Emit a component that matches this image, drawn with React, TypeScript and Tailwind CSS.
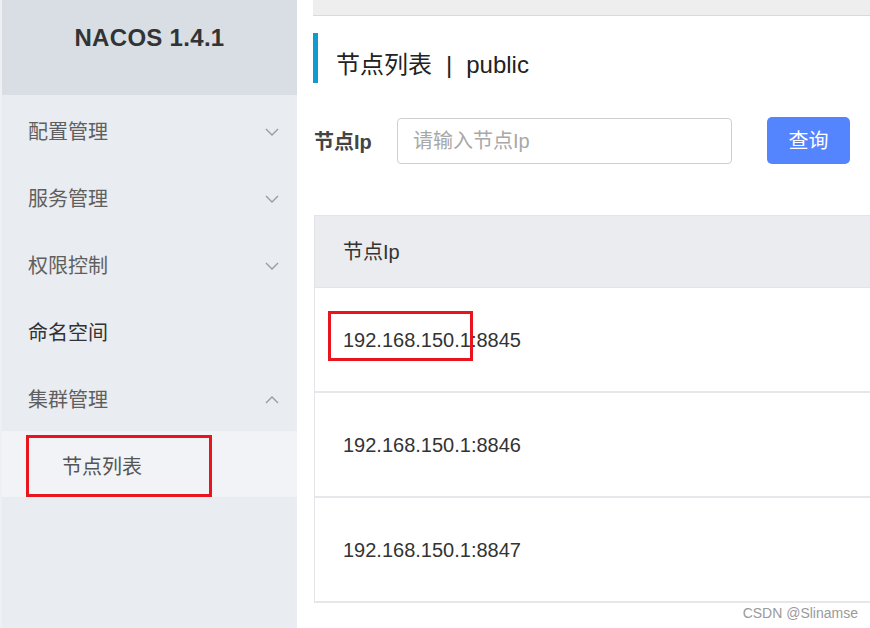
import React from "react"

const font = { fontFamily: '"Liberation Sans", "Noto Sans CJK SC", sans-serif' }

function Chevron({ up }: { up?: boolean }) {
     return (
          <svg width="14" height="8" viewBox="0 0 14 8" className="shrink-0">
               <polyline
                    points={up ? "1,7 7,1 13,7" : "1,1 7,7 13,1"}
                    fill="none"
                    stroke="#9a9a9a"
                    strokeWidth="1.3"
               />
          </svg>
     )
}

const menu = [
     { label: "配置管理", arrow: "down" },
     { label: "服务管理", arrow: "down" },
     { label: "权限控制", arrow: "down" },
     { label: "命名空间", arrow: "" },
     { label: "集群管理", arrow: "up" },
]

const nodes = ["192.168.150.1:8845", "192.168.150.1:8846", "192.168.150.1:8847"]

export default function App() {
     return (
          <div className="flex w-[870px] h-[628px] overflow-hidden bg-white" style={font}>
               <aside className="w-[297px] shrink-0 flex flex-col bg-[#e9ecf0] border-l-2 border-[#eef0f3]">
                    <div className="h-[95px] shrink-0 bg-[#d9dee5] flex justify-center pt-[20px]">
                         <span className="text-[24px] font-bold text-[#333] tracking-[0.3px]">NACOS 1.4.1</span>
                    </div>
                    {menu.map((m) => (
                         <div key={m.label} className="h-[67px] flex items-center justify-between pl-[26px] pr-[18px] pt-[6px]">
                              <span className={`text-[20px] ${m.arrow ? "text-[#5f5f5f]" : "text-[#333]"}`}>{m.label}</span>
                              {m.arrow && <Chevron up={m.arrow === "up"} />}
                         </div>
                    ))}
                    <div className="h-[66px] mt-[1px] bg-[#f1f3f6] flex items-center pl-[24px]">
                         <div className="relative w-[186px] h-[62px] mt-[4px] border-[3px] border-[#e8141e] flex items-center pl-[33px] pt-[2px]">
                              <span className="text-[20px] text-[#555]">节点列表</span>
                         </div>
                    </div>
               </aside>

               <main className="flex-1 ml-[16px] flex flex-col min-w-0">
                    <div className="h-[16px] shrink-0 bg-[#eeeeee] border-b border-[#d9d9d9]" />

                    <div className="mt-[17px] h-[50px] flex items-center border-l-[5px] border-[#109ccf] pl-[18px] pt-[14px]">
                         <span className="text-[24px] text-[#222]">节点列表</span>
                         <span className="text-[24px] text-[#222] mx-[14px]">|</span>
                         <span className="text-[24px] text-[#222]">public</span>
                    </div>

                    <div className="mt-[34px] flex items-center pl-[1px]">
                         <span className="text-[20px] font-bold text-[#444] w-[83px] pt-[2px]">节点Ip</span>
                         <div className="w-[335px] h-[46px] border border-[#cfcfcf] rounded-[4px] flex items-center pl-[15px]">
                              <span className="text-[20px] text-[#a8a8a8]">请输入节点Ip</span>
                         </div>
                         <button className="ml-[35px] w-[83px] h-[47px] rounded-[5px] bg-[#5584ff] text-white text-[20px]">
                              查询
                         </button>
                    </div>

                    <div className="mt-[51px] ml-[1px] w-[620px] border-l border-t border-[#e3e4e8]">
                         <div className="h-[72px] bg-[#ebecf0] border-b border-[#e3e4e8] flex items-center pl-[28px]">
                              <span className="text-[20px] text-[#333]">节点Ip</span>
                         </div>
                         {nodes.map((ip, i) => (
                              <div key={ip} className="h-[105px] border-b-2 border-[#e6e7eb] flex items-center pl-[28px]">
                                   <span className="relative text-[20px] text-[#333]">
                                        {ip}
                                        {i === 0 && (
                                             <span className="absolute left-[-15px] top-[-14px] w-[145px] h-[50px] border-[3px] border-[#e8141e]" />
                                        )}
                                   </span>
                              </div>
                         ))}
                    </div>
                    <div className="flex justify-end pr-[12px]">
                         <span className="text-[14px] text-[#9a9a9a]">CSDN @Slinamse</span>
                    </div>
               </main>
          </div>
     )
}
